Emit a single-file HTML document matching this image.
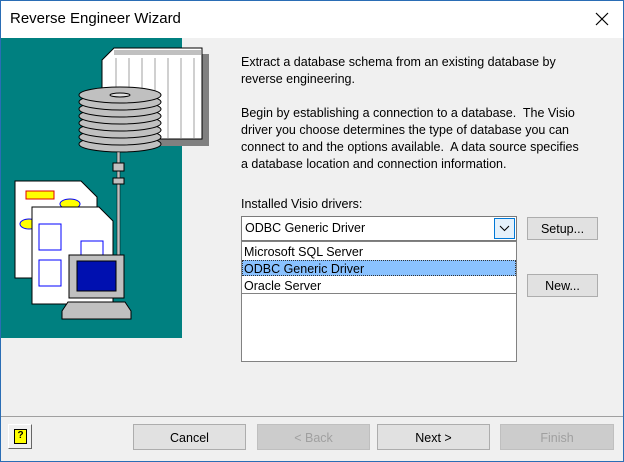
<html><head><style>
body{margin:0;width:624px;height:462px;background:#f0f0f0;font-family:"Liberation Sans",sans-serif;font-size:12.5px;color:#000;position:relative;overflow:hidden}
.a{position:absolute}
.btn{position:absolute;height:26px;border:1px solid #adadad;background:#e1e1e1;text-align:center;line-height:26px;box-sizing:border-box}
.dis{color:#a0a0a0;background:#cccccc;border-color:#bfbfbf}
p{margin:0}
</style></head><body>
<div class="a" style="left:0;top:0;width:624px;height:462px;border:1px solid #2a6db5;box-sizing:border-box"></div>
<div class="a" style="top:1px;left:1px;width:622px;height:37px;background:#fff"></div>
<div class="a" style="left:10px;top:10px;font-size:15px">Reverse Engineer Wizard</div>
<svg class="a" style="left:595px;top:12px" width="14" height="14"><path d="M1 1L13 13M13 1L1 13" stroke="#000" stroke-width="1.2"/></svg>
<svg class="a" style="left:1px;top:38px" width="215" height="300">
<rect width="181" height="300" fill="#008080"/>
<rect x="181" y="0" width="34" height="300" fill="#f0f0f0"/>
<rect x="108" y="16" width="100" height="92" fill="#808080"/>
<path d="M113 10h88v91H101V22z" fill="#fff" stroke="#000"/>
<rect x="113" y="12" width="87" height="5" fill="#c0c0c0"/>
<g stroke="#c0c0c0" stroke-width="1.5"><line x1="115" y1="20" x2="115" y2="100"/><line x1="128" y1="20" x2="128" y2="100"/><line x1="141" y1="20" x2="141" y2="100"/><line x1="154" y1="20" x2="154" y2="100"/><line x1="167" y1="20" x2="167" y2="100"/><line x1="180" y1="20" x2="180" y2="100"/><line x1="193" y1="20" x2="193" y2="100"/></g>
<g fill="#c0c0c0" stroke="#000"><ellipse cx="119" cy="106" rx="41" ry="8"/><ellipse cx="119" cy="99" rx="41" ry="8"/><ellipse cx="119" cy="92" rx="41" ry="8"/><ellipse cx="119" cy="85" rx="41" ry="8"/><ellipse cx="119" cy="78" rx="41" ry="8"/><ellipse cx="119" cy="71" rx="41" ry="8"/><ellipse cx="119" cy="64" rx="41" ry="8"/><ellipse cx="119" cy="57" rx="41" ry="8"/></g>
<ellipse cx="119" cy="57" rx="10" ry="2" fill="#e0e0e0" stroke="#000"/>
<rect x="116" y="114" width="3" height="105" fill="#c0c0c0" stroke="#000" stroke-width=".5"/>
<rect x="112" y="125" width="11" height="8" fill="#c0c0c0" stroke="#000"/>
<rect x="112" y="140" width="11" height="6" fill="#c0c0c0" stroke="#000"/>
<path d="M14 143h66l16 16v81H14z" fill="#fff" stroke="#000"/>
<rect x="25" y="153" width="28" height="8" fill="#ff0" stroke="#d00"/>
<ellipse cx="69" cy="166" rx="10" ry="5" fill="#ff0" stroke="#00f"/>
<ellipse cx="28" cy="186" rx="9" ry="5" fill="#ff0" stroke="#00f"/>
<path d="M31 169h67l14 14v83H31z" fill="#fff" stroke="#000"/>
<rect x="38" y="148" width="0" height="0"/>
<rect x="38" y="186" width="22" height="26" fill="#fff" stroke="#00f"/>
<rect x="80" y="203" width="22" height="20" fill="#fff" stroke="#00f"/>
<rect x="38" y="222" width="22" height="26" fill="#fff" stroke="#00f"/>
<rect x="68" y="217" width="55" height="43" fill="#c0c0c0" stroke="#000"/>
<rect x="76" y="223" width="39" height="30" fill="#0010b0" stroke="#000"/>
<path d="M61 281v-8l6-9h57l6 9v8z" fill="#c0c0c0" stroke="#000"/>
</svg>
<div class="a" style="left:241px;top:54px;line-height:17px;width:370px">
<p>Extract a database schema from an existing database by<br>reverse engineering.</p>
<p style="margin-top:17px">Begin by establishing a connection to a database.&nbsp; The Visio<br>driver you choose determines the type of database you can<br>connect to and the options available.&nbsp; A data source specifies<br>a database location and connection information.</p>
</div>
<div class="a" style="left:241px;top:197px">Installed Visio drivers:</div>
<div class="a" style="left:241px;top:216px;width:276px;height:25px;background:#fff;border:1px solid #7a7a7a;box-sizing:border-box"></div>
<div class="a" style="left:245px;top:221px">ODBC Generic Driver</div>
<div class="a" style="left:494px;top:218px;width:21px;height:21px;background:#e5f1fb;border:1px solid #0078d7;box-sizing:border-box"></div>
<svg class="a" style="left:499px;top:225px" width="11" height="8"><path d="M1 1l4.5 4.5L10 1" stroke="#000" fill="none"/></svg>
<div class="a" style="left:241px;top:241px;width:276px;height:121px;background:#fff;border:1px solid #828282;box-sizing:border-box"></div>
<div class="a" style="left:242px;top:260px;width:274px;height:16px;background:#8ac2ff;outline:1px dotted #333;outline-offset:-1px"></div>
<div class="a" style="left:244px;top:244px;line-height:17px">Microsoft SQL Server<br>ODBC Generic Driver<br>Oracle Server</div>
<div class="a" style="left:241px;top:293px;width:276px;height:1px;background:#828282"></div>
<div class="btn" style="left:527px;top:217px;width:71px;height:23px;line-height:22px">Setup...</div>
<div class="btn" style="left:527px;top:274px;width:71px;height:23px;line-height:22px">New...</div>
<div class="a" style="left:1px;top:416px;width:622px;height:1px;background:#a0a0a0"></div>
<div class="btn" style="left:8px;top:424px;width:24px;height:25px;background:#f0f0f0;border-color:#fff #666 #666 #fff"></div>
<div class="a" style="left:14px;top:429px;width:11px;height:13px;background:#ff0;border:1px solid #000;font-size:10px;line-height:12px;text-align:center;font-weight:bold">?</div>
<div class="btn" style="left:133px;top:424px;width:113px">Cancel</div>
<div class="btn dis" style="left:257px;top:424px;width:113px">&lt; Back</div>
<div class="btn" style="left:377px;top:424px;width:113px">Next &gt;</div>
<div class="btn dis" style="left:500px;top:424px;width:114px">Finish</div>
</body></html>
